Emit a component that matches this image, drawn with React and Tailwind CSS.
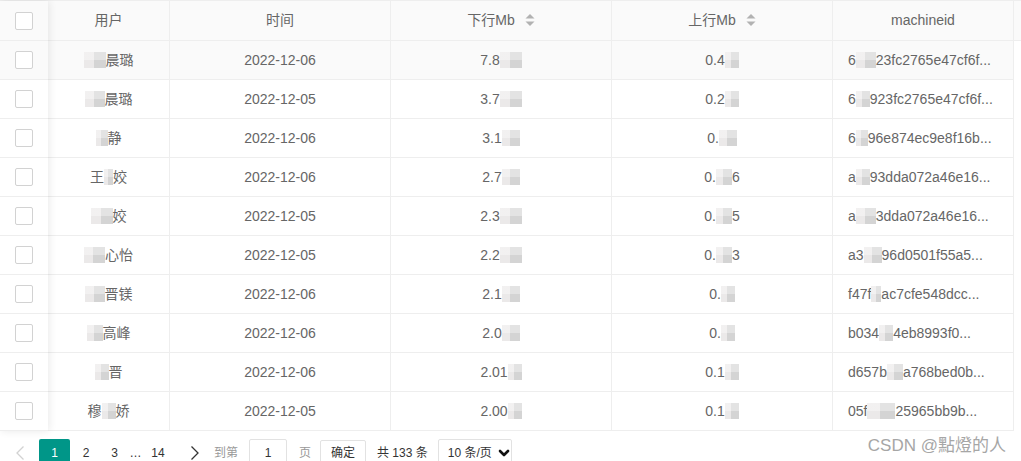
import React from "react";

const rows = [
  { u: [22, "晨璐"], t: "2022-12-06", d: ["7.8", 22], up: ["0.4", 14], m: ["6", 20, "23fc2765e47cf6f..."] },
  { u: [20, "晨璐"], t: "2022-12-05", d: ["3.7", 22], up: ["0.2", 14], m: ["6", 14, "923fc2765e47cf6f..."] },
  { u: [12, "静"], t: "2022-12-06", d: ["3.1", 18], up: ["0.", 18], m: ["6", 12, "96e874ec9e8f16b..."] },
  { u: ["王", 9, "姣"], t: "2022-12-06", d: ["2.7", 18], up: ["0.", 16, "6"], m: ["a", 14, "93dda072a46e16..."] },
  { u: [22, "姣"], t: "2022-12-05", d: ["2.3", 22], up: ["0.", 16, "5"], m: ["a", 20, "3dda072a46e16..."] },
  { u: [21, "心怡"], t: "2022-12-05", d: ["2.2", 22], up: ["0.", 16, "3"], m: ["a3", 18, "96d0501f55a5..."] },
  { u: [20, "晋镁"], t: "2022-12-06", d: ["2.1", 18], up: ["0.", 14], m: ["f47f", 10, "ac7cfe548dcc..."] },
  { u: [16, "高峰"], t: "2022-12-06", d: ["2.0", 18], up: ["0.", 14], m: ["b034", 14, "4eb8993f0..."] },
  { u: [14, "晋"], t: "2022-12-06", d: ["2.01", 14], up: ["0.1", 14], m: ["d657b", 16, "a768bed0b..."] },
  { u: ["穆", 14, "娇"], t: "2022-12-05", d: ["2.00", 14], up: ["0.1", 14], m: ["05f", 28, "25965bb9b..."] },
];

function Blur({ w }) {
  return (
    <span
      className="inline-block h-[16px] align-[-3px]"
      style={{
        width: w,
        background:
          "linear-gradient(to bottom, rgba(255,255,255,0.35) 0 50%, rgba(255,255,255,0) 50% 100%), linear-gradient(to right, #ebe9e9 0 45%, #d4d4d4 45% 100%)",
      }}
    />
  );
}

function Parts({ parts }) {
  return (
    <>
      {parts.map((p, i) =>
        typeof p === "number" ? <Blur key={i} w={p} /> : <span key={i}>{p}</span>
      )}
    </>
  );
}

function Checkbox() {
  return <div className="w-[18px] h-[18px] border border-[#d2d2d2] rounded-[2px] bg-white" />;
}

function SortIcon() {
  return (
    <svg width="10" height="13" viewBox="0 0 10 13" className="ml-[10px]">
      <path d="M5 0 L9.5 4.5 L0.5 4.5 Z" fill="#b2b2b2" />
      <path d="M0.5 7.5 L9.5 7.5 L5 12 Z" fill="#b2b2b2" />
    </svg>
  );
}

function Chevron({ dir, color }) {
  return (
    <svg width="10" height="16" viewBox="0 0 10 16">
      <polyline
        points={dir === "left" ? "8.5,1.5 2,8 8.5,14.5" : "1.5,1.5 8,8 1.5,14.5"}
        fill="none"
        stroke={color}
        strokeWidth="1.3"
      />
    </svg>
  );
}

function Down() {
  return (
    <svg width="12" height="10" viewBox="0 0 12 10" className="shrink-0">
      <polyline points="2,3 6,7 10,3" fill="none" stroke="#111" strokeWidth="2.6" strokeLinecap="round" strokeLinejoin="round" />
    </svg>
  );
}

export default function App() {
  return (
    <div
      className="relative w-[1021px] h-[461px] overflow-hidden bg-white text-[14px] text-[#666]"
      style={{ fontFamily: '"Liberation Sans", Arial, "Noto Sans CJK SC", sans-serif' }}
    >
      <div className="flex border-t border-[#eee]">
        {/* fixed checkbox column */}
        <div className="relative z-10 w-[48px] shrink-0 bg-white shadow-[1px_0_8px_rgba(0,0,0,0.09)]">
          <div className="h-[40px] bg-[#fafafa] border-b border-[#eee] flex items-center pl-[15px]">
            <Checkbox />
          </div>
          {rows.map((r, i) => (
            <div
              key={i}
              className={`h-[39px] border-b border-[#eee] flex items-center pl-[15px] ${i === 0 ? "bg-[#fafafa]" : "bg-white"}`}
            >
              <Checkbox />
            </div>
          ))}
        </div>

        {/* main table */}
        <div className="flex-1 min-w-0">
          <div className="flex h-[40px] bg-[#fafafa] border-b border-[#eee]">
            <div className="w-[122px] border-r border-[#eee] flex items-center justify-center">用户</div>
            <div className="w-[221px] border-r border-[#eee] flex items-center justify-center">时间</div>
            <div className="w-[221px] border-r border-[#eee] flex items-center justify-center">
              下行Mb
              <SortIcon />
            </div>
            <div className="w-[221px] border-r border-[#eee] flex items-center justify-center">
              上行Mb
              <SortIcon />
            </div>
            <div className="w-[181px] border-r border-[#eee] flex items-center justify-center">machineid</div>
            <div className="flex-1" />
          </div>
          {rows.map((r, i) => (
            <div
              key={i}
              className={`flex h-[39px] ${i === 0 ? "bg-[#fafafa]" : "bg-white"}`}
            >
              <div className="w-[122px] border-r border-b border-[#eee] flex items-center justify-center whitespace-nowrap">
                <Parts parts={r.u} />
              </div>
              <div className="w-[221px] border-r border-b border-[#eee] flex items-center justify-center">{r.t}</div>
              <div className="w-[221px] border-r border-b border-[#eee] flex items-center justify-center whitespace-nowrap">
                <Parts parts={r.d} />
              </div>
              <div className="w-[221px] border-r border-b border-[#eee] flex items-center justify-center whitespace-nowrap">
                <Parts parts={r.up} />
              </div>
              <div className="w-[181px] border-r border-b border-[#eee] flex items-center pl-[15px] whitespace-nowrap overflow-hidden">
                <Parts parts={r.m} />
              </div>
              <div className="flex-1 bg-white" />
            </div>
          ))}
        </div>
      </div>

      {/* pagination footer */}
      <div className="flex items-start h-[31px] pt-[8px] text-[12px] text-[#333] whitespace-nowrap">
        <div className="w-[39px] h-[28px] flex items-center justify-center">
          <Chevron dir="left" color="#d2d2d2" />
        </div>
        <div className="w-[31px] h-[28px] flex items-center justify-center bg-[#009688] text-white rounded-[2px]">1</div>
        <div className="w-[32px] h-[28px] flex items-center justify-center">2</div>
        <div className="w-[25px] h-[28px] flex items-center justify-center">3</div>
        <div className="w-[17px] h-[28px] flex items-center justify-center text-[#333]">…</div>
        <div className="w-[28px] h-[28px] flex items-center justify-center">14</div>
        <div className="ml-[10px] w-[26px] h-[28px] flex items-center justify-center">
          <Chevron dir="right" color="#333" />
        </div>
        <div className="ml-[6px] h-[28px] flex items-center text-[#999]">到第</div>
        <div className="ml-[11px] w-[38px] h-[28px] border border-[#e2e2e2] rounded-[2px] flex items-center justify-center">1</div>
        <div className="ml-[12px] h-[28px] flex items-center text-[#999]">页</div>
        <div className="ml-[9px] w-[46px] h-[26px] mt-[1px] border border-[#e2e2e2] rounded-[2px] flex items-center justify-center bg-white">确定</div>
        <div className="ml-[11px] h-[28px] flex items-center">共 133 条</div>
        <div className="ml-[10px] w-[74px] h-[28px] border border-[#e2e2e2] rounded-[2px] flex items-center pl-[9px] gap-[6px] whitespace-nowrap">
          <span>10 条/页</span>
          <Down />
        </div>
      </div>

      <div className="absolute right-[15px] bottom-[7px] text-[17px] text-[#a6a6a6] leading-none">
        CSDN @點燈的人
      </div>
    </div>
  );
}
